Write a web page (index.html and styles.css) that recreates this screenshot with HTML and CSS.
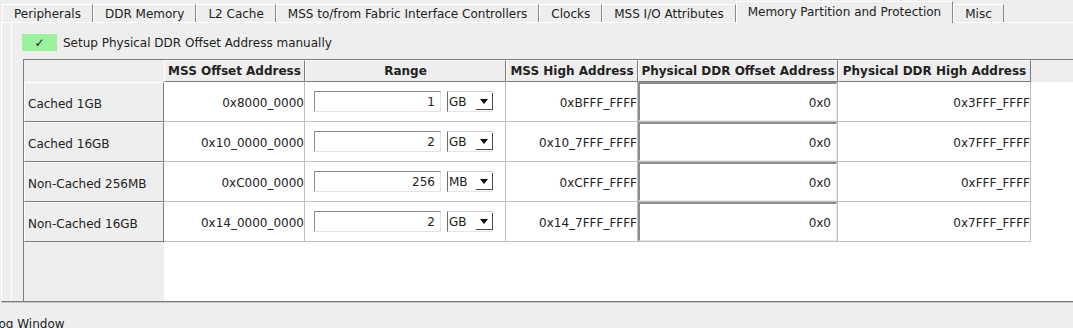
FILE: index.html
```html
<!DOCTYPE html>
<html>
<head>
<meta charset="utf-8">
<link rel="stylesheet" href="styles.css">
</head>
<body>
<div class="tabs">
  <div class="tab">Peripherals</div>
  <div class="tab">DDR Memory</div>
  <div class="tab">L2 Cache</div>
  <div class="tab">MSS to/from Fabric Interface Controllers</div>
  <div class="tab">Clocks</div>
  <div class="tab">MSS I/O Attributes</div>
  <div class="tab active">Memory Partition and Protection</div>
  <div class="tab">Misc</div>
</div>
<div class="panel">
  <div class="inner">
    <div class="check">
      <span class="box">✓</span>
      <span class="check-label">Setup Physical DDR Offset Address manually</span>
    </div>
    <div class="table-wrap">
      <div class="grid">
        <div class="corner"></div>
        <div class="hdr">MSS Offset Address</div>
        <div class="hdr">Range</div>
        <div class="hdr">MSS High Address</div>
        <div class="hdr">Physical DDR Offset Address</div>
        <div class="hdr">Physical DDR High Address</div>
        <div class="hdr-fill"></div>

        <div class="rowhdr">Cached 1GB</div>
        <div class="cell">0x8000_0000</div>
        <div class="cell range"><div class="field">1</div><div class="combo"><span class="combo-text">GB</span><span class="combo-btn"><svg width="8" height="5" viewBox="0 0 8 5"><path d="M0 0H8L4 5Z" fill="#111"/></svg></span></div></div>
        <div class="cell">0xBFFF_FFFF</div>
        <div class="cell edit"><div class="editor">0x0</div></div>
        <div class="cell">0x3FFF_FFFF</div>
        <div class="fill"></div>

        <div class="rowhdr">Cached 16GB</div>
        <div class="cell">0x10_0000_0000</div>
        <div class="cell range"><div class="field">2</div><div class="combo"><span class="combo-text">GB</span><span class="combo-btn"><svg width="8" height="5" viewBox="0 0 8 5"><path d="M0 0H8L4 5Z" fill="#111"/></svg></span></div></div>
        <div class="cell">0x10_7FFF_FFFF</div>
        <div class="cell edit"><div class="editor">0x0</div></div>
        <div class="cell">0x7FFF_FFFF</div>
        <div class="fill"></div>

        <div class="rowhdr">Non-Cached 256MB</div>
        <div class="cell">0xC000_0000</div>
        <div class="cell range"><div class="field">256</div><div class="combo"><span class="combo-text">MB</span><span class="combo-btn"><svg width="8" height="5" viewBox="0 0 8 5"><path d="M0 0H8L4 5Z" fill="#111"/></svg></span></div></div>
        <div class="cell">0xCFFF_FFFF</div>
        <div class="cell edit"><div class="editor">0x0</div></div>
        <div class="cell">0xFFF_FFFF</div>
        <div class="fill"></div>

        <div class="rowhdr">Non-Cached 16GB</div>
        <div class="cell">0x14_0000_0000</div>
        <div class="cell range"><div class="field">2</div><div class="combo"><span class="combo-text">GB</span><span class="combo-btn"><svg width="8" height="5" viewBox="0 0 8 5"><path d="M0 0H8L4 5Z" fill="#111"/></svg></span></div></div>
        <div class="cell">0x14_7FFF_FFFF</div>
        <div class="cell edit"><div class="editor">0x0</div></div>
        <div class="cell">0x7FFF_FFFF</div>
        <div class="fill"></div>

        <div class="rowhdr-fill"></div>
        <div class="empty"></div>
      </div>
    </div>
  </div>
</div>
<div class="log">Log Window</div>
</body>
</html>
```
FILE: styles.css
```css
html, body {
  margin: 0;
  padding: 0;
  background: #eeeeee;
  overflow: hidden;
}
body {
  font-family: "DejaVu Sans", sans-serif;
  font-size: 12px;
  color: #222222;
  width: 1073px;
  height: 328px;
}
.tabs {
  display: flex;
  align-items: flex-end;
  height: 23px;
  box-sizing: border-box;
  padding-left: 2px;
  border-bottom: 1px solid #ffffff;
}
.tab {
  height: 18px;
  box-sizing: border-box;
  padding: 0 11px;
  line-height: 18px;
  border-top: 1px solid #ffffff;
  border-left: 1px solid #ffffff;
  border-right: 1px solid #8a8a8a;
  white-space: nowrap;
}
.tab.active {
  height: 22px;
  margin-bottom: -1px;
  line-height: 21px;
  background: #eeeeee;
}
.panel {
  height: 278px;
  margin-left: 1px;
  border-left: 1px solid #ffffff;
  padding-left: 9px;
  border-bottom: 1px solid #7c7c7c;
  box-shadow: 0 1px 0 #c6c6c6;
  display: flex;
}
.inner {
  flex: 1;
  border-left: 1px solid #ffffff;
  padding: 11px 0 0 10px;
  display: flex;
  flex-direction: column;
  min-width: 0;
}
.check {
  display: flex;
  align-items: center;
  height: 17px;
  margin-bottom: 8px;
}
.box {
  width: 35px;
  height: 17px;
  background: #9cf29c;
  display: flex;
  align-items: center;
  justify-content: center;
  font-size: 12px;
  font-weight: bold;
  color: #111;
}
.check-label {
  margin-left: 6px;
}
.table-wrap {
  flex: 1;
  margin-left: 1px;
  border-top: 1px solid #7c7c7c;
  border-left: 1px solid #7c7c7c;
  overflow: hidden;
  display: flex;
}
.grid {
  flex: 1;
  display: grid;
  grid-template-columns: 140px 141px 201px 132px 200px 193px 1fr;
  grid-template-rows: 22px repeat(4, 40px) 1fr;
}
.corner {
  background: #eeeeee;
}
.hdr {
  box-sizing: border-box;
  background: #eeeeee;
  border-top: 1px solid #ffffff;
  border-left: 1px solid #ffffff;
  border-right: 1px solid #7c7c7c;
  border-bottom: 1px solid #7c7c7c;
  font-weight: bold;
  text-align: center;
  line-height: 21px;
  white-space: nowrap;
  overflow: hidden;
}
.hdr-fill {
  background: #eeeeee;
}
.rowhdr {
  box-sizing: border-box;
  background: #eeeeee;
  border-top: 1px solid #ffffff;
  border-left: 1px solid #ffffff;
  border-right: 1px solid #7c7c7c;
  border-bottom: 1px solid #7c7c7c;
  padding-left: 3px;
  display: flex;
  align-items: center;
  padding-top: 4px;
  white-space: nowrap;
}
.rowhdr-fill {
  background: #eeeeee;
}
.cell {
  box-sizing: border-box;
  background: #ffffff;
  border-right: 1px solid #c0c0c0;
  border-bottom: 1px solid #c0c0c0;
  display: flex;
  align-items: center;
  justify-content: flex-end;
  padding-right: 0;
  padding-top: 2px;
  white-space: nowrap;
}
.cell.range {
  justify-content: flex-start;
  padding-left: 9px;
  padding-top: 0;
}
.field {
  width: 127px;
  height: 21px;
  box-sizing: border-box;
  border-top: 1px solid #8c8c8c;
  border-left: 1px solid #8c8c8c;
  border-right: 1px solid #e2e2e2;
  border-bottom: 1px solid #e2e2e2;
  background: #ffffff;
  text-align: right;
  padding-right: 5px;
  line-height: 20px;
}
.combo {
  margin-left: 6px;
  width: 46px;
  height: 21px;
  box-sizing: border-box;
  border-left: 1px solid #6e6e6e;
  border-top: 1px solid #d0d0d0;
  border-bottom: 1px solid #e4e4e4;
  background: #ffffff;
  display: flex;
  align-items: stretch;
}
.combo-text {
  flex: 1;
  padding-left: 1px;
  line-height: 20px;
}
.combo-btn {
  width: 17px;
  box-sizing: border-box;
  border-right: 1px solid #4a4a4a;
  border-bottom: 1px solid #4a4a4a;
  margin: 1px 0 1px 0;
  display: flex;
  align-items: center;
  justify-content: center;
}
.cell.edit {
  padding: 0;
  align-items: stretch;
}
.editor {
  flex: 1;
  box-sizing: border-box;
  border-top: 2px solid #8c8c8c;
  border-left: 2px solid #8c8c8c;
  border-bottom: 1px solid #e6e6e6;
  border-right: 1px solid #e6e6e6;
  display: flex;
  align-items: center;
  justify-content: flex-end;
  padding-right: 5px;
  padding-top: 1px;
}
.fill {
  background: #ffffff;
}
.empty {
  grid-column: 2 / 8;
  background: #ffffff;
}
.log {
  margin-top: 15px;
  margin-left: -8px;
  line-height: 14px;
  white-space: nowrap;
}
```
